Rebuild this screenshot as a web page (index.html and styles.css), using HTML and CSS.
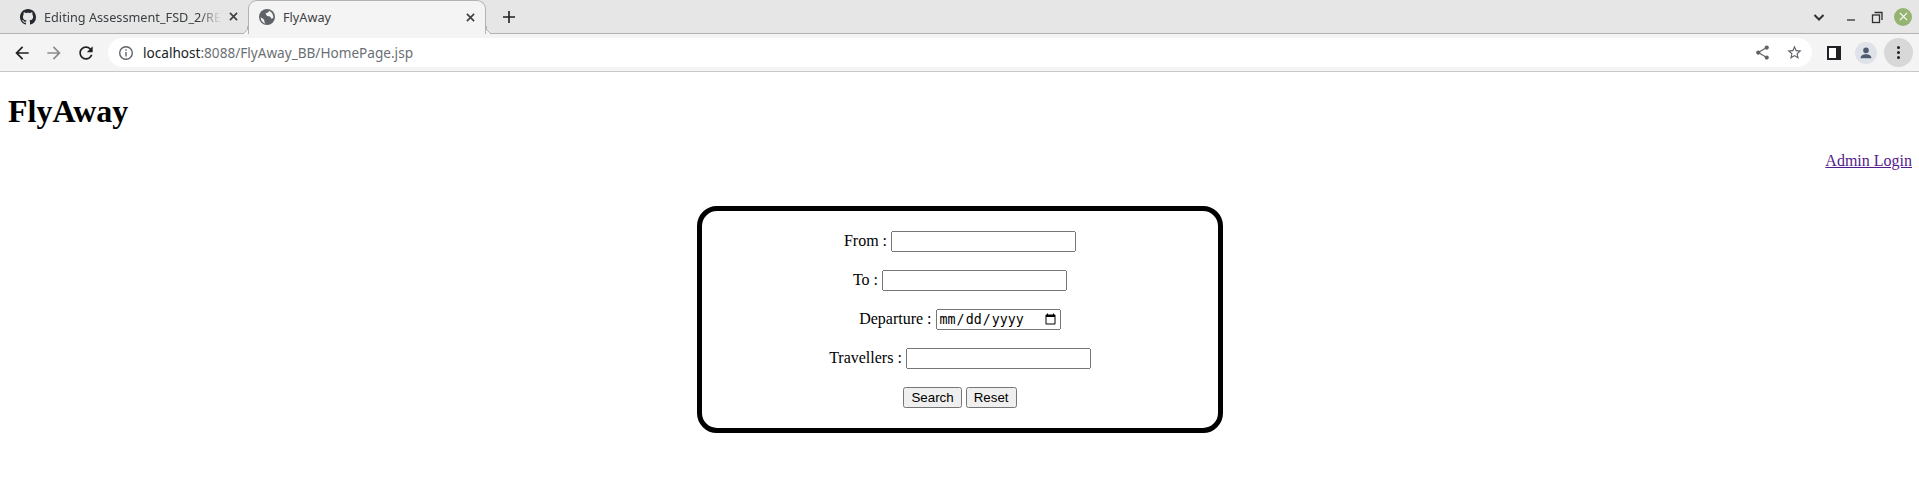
FILE: index.html
```html
<!DOCTYPE html>
<html lang="en">
<head>
    <meta charset="UTF-8">
    <meta name="viewport" content="width=device-width, initial-scale=1.0">
    <title>FlyAway</title>
    <link rel="stylesheet" href="styles.css">
</head>
<body>

<div class="tabbar">
    <div class="tab">
        <svg class="tab-icon" viewBox="0 0 16 16"><path fill="#24292f" d="M8 0C3.58 0 0 3.58 0 8c0 3.54 2.29 6.53 5.47 7.59.4.07.55-.17.55-.38 0-.19-.01-.82-.01-1.49-2.01.37-2.53-.49-2.69-.94-.09-.23-.48-.94-.82-1.13-.28-.15-.68-.52-.01-.53.63-.01 1.08.58 1.23.82.72 1.21 1.87.87 2.33.66.07-.52.28-.87.51-1.07-1.78-.2-3.64-.89-3.64-3.95 0-.87.31-1.59.82-2.15-.08-.2-.36-1.02.08-2.12 0 0 .67-.21 2.2.82.64-.18 1.32-.27 2-.27.68 0 1.36.09 2 .27 1.53-1.04 2.2-.82 2.2-.82.44 1.1.16 1.92.08 2.12.51.56.82 1.27.82 2.15 0 3.07-1.87 3.75-3.65 3.95.29.25.54.73.54 1.48 0 1.07-.01 1.93-.01 2.2 0 .21.15.46.55.38A8.01 8.01 0 0 0 16 8c0-4.42-3.58-8-8-8z"/></svg>
        <span class="tab-title tab-title-fade">Editing Assessment_FSD_2/RE</span>
        <svg class="tab-close" viewBox="0 0 10 10"><path d="M1 1l8 8M9 1l-8 8"/></svg>
    </div>
    <div class="tab tab-active">
        <svg class="tab-icon" viewBox="0 0 16 16"><circle cx="8" cy="8" r="8" fill="#5f6368"/><path fill="#f4f4f4" d="M10.500 1.800L8.800 3.500 6.500 4.500 8 7l3 .5 1.500 2.200 1.800-.7c.3-2.800-1.100-5.700-3.800-7zM1.700 8.200l3.300 2.300.5 2.600 1 1.300c-2.800-.5-4.800-3.200-4.800-6.200z"/></svg>
        <span class="tab-title">FlyAway</span>
        <svg class="tab-close" viewBox="0 0 10 10"><path d="M1 1l8 8M9 1l-8 8"/></svg>
    </div>
    <svg class="new-tab" viewBox="0 0 14 14"><path d="M7 1v12M1 7h12"/></svg>

    <div class="window-controls">
        <svg class="win-chevron" viewBox="0 0 16 16"><path d="M3.500 6L8 10.500 12.500 6"/></svg>
        <svg class="win-min" viewBox="0 0 16 16"><path d="M4 11h8"/></svg>
        <svg class="win-restore" viewBox="0 0 16 16"><path d="M6.500 3.500h7.500V11"/><rect x="4.500" y="6" width="7" height="7.500"/></svg>
        <div class="win-close">
            <svg viewBox="0 0 10 10"><path d="M1 1l8 8M9 1l-8 8"/></svg>
        </div>
    </div>
</div>

<div class="toolbar">
    <div class="tool-btn"><svg viewBox="0 0 24 24"><path fill="#202124" d="M20 11H7.830l5.590-5.590L12 4l-8 8 8 8 1.410-1.410L7.830 13H20v-2z"/></svg></div>
    <div class="tool-btn"><svg viewBox="0 0 24 24"><path fill="#8a8c8e" d="M4 11h12.170l-5.590-5.590L12 4l8 8-8 8-1.410-1.410L16.170 13H4v-2z"/></svg></div>
    <div class="tool-btn"><svg viewBox="0 0 24 24"><path fill="#202124" d="M17.650 6.350C16.200 4.900 14.210 4 12 4c-4.420 0-7.990 3.580-7.990 8s3.570 8 7.990 8c3.730 0 6.840-2.550 7.730-6h-2.080c-.82 2.330-3.040 4-5.650 4-3.310 0-6-2.690-6-6s2.690-6 6-6c1.660 0 3.140.69 4.220 1.780L13 11h7V4l-2.350 2.350z"/></svg></div>

    <div class="omnibox">
        <svg class="info-icon" viewBox="0 0 16 16"><circle cx="8" cy="8" r="6.300"/><path d="M8 7v4.500M8 4.300v1.500"/></svg>
        <span class="url"><span class="url-host">localhost</span>:8088/FlyAway_BB/HomePage.jsp</span>
        <div class="omni-icons">
            <div class="tool-btn"><svg class="small-icon" viewBox="0 0 24 24"><path fill="#5f6368" d="M18 16.080c-.76 0-1.440.3-1.960.77L8.910 12.700c.05-.23.09-.46.09-.7s-.04-.47-.09-.7l7.050-4.110c.54.5 1.250.81 2.040.81 1.660 0 3-1.340 3-3s-1.340-3-3-3-3 1.340-3 3c0 .24.04.47.09.7L8.040 9.810C7.500 9.310 6.790 9 6 9c-1.660 0-3 1.340-3 3s1.340 3 3 3c.79 0 1.500-.31 2.040-.81l7.120 4.160c-.05.21-.08.43-.08.65 0 1.610 1.310 2.920 2.920 2.920 1.610 0 2.920-1.310 2.920-2.920s-1.310-2.920-2.920-2.920z"/></svg></div>
            <div class="tool-btn"><svg class="small-icon" viewBox="0 0 24 24"><path fill="#5f6368" d="M22 9.240l-7.190-.62L12 2 9.190 8.630 2 9.240l5.460 4.730L5.820 21 12 17.270 18.180 21l-1.630-7.030L22 9.240zM12 15.400l-3.760 2.270 1-4.280-3.320-2.880 4.380-.38L12 6.100l1.710 4.040 4.380.38-3.320 2.880 1 4.280L12 15.400z"/></svg></div>
        </div>
    </div>

    <div class="tool-btn"><div class="side-panel"></div></div>
    <div class="tool-btn">
        <div class="avatar">
            <svg viewBox="0 0 16 16"><circle cx="8" cy="5" r="3.200" fill="#4f5b70"/><path fill="#4f5b70" d="M1.800 14c0-3 2.800-4.600 6.200-4.600s6.200 1.600 6.200 4.600z"/></svg>
        </div>
    </div>
    <div class="tool-btn">
        <div class="menu-btn"><span></span><span></span><span></span></div>
    </div>
</div>

<div class="page">
    <h1>FlyAway</h1>
    <div class="admin-link"><a href="#">Admin Login</a></div>

    <form class="search-box">
        <div class="form-row">
            <label for="from">From :</label>
            <input type="text" id="from" name="from">
        </div>
        <div class="form-row">
            <label for="to">To :</label>
            <input type="text" id="to" name="to">
        </div>
        <div class="form-row">
            <label for="departure">Departure :</label>
            <input type="date" id="departure" name="departure">
        </div>
        <div class="form-row">
            <label for="travellers">Travellers :</label>
            <input type="text" id="travellers" name="travellers">
        </div>
        <div class="form-row">
            <input type="submit" value="Search">
            <input type="reset" value="Reset">
        </div>
    </form>
</div>

</body>
</html>
```

FILE: styles.css
```css
body {
    margin: 0;
    background-color: white;
    font-family: "Liberation Serif", serif;
    font-size: 16px;
}

/* browser window top */
.tabbar {
    display: flex;
    align-items: center;
    box-sizing: border-box;
    height: 34px;
    padding-left: 8px;
    background-color: #e6e6e6;
    border-bottom: 1px solid #b3b3b3;
    font-family: "Noto Sans", sans-serif;
    font-size: 12.700px;
    color: #3c4043;
}
.tab {
    display: flex;
    align-items: center;
    box-sizing: border-box;
    width: 240px;
    height: 33px;
    padding: 0 8px 0 12px;
}
.tab-active {
    position: relative;
    width: 238px;
    height: 34px;
    margin-bottom: -1px;
    padding: 0 7px 1px 10px;
    background-color: #f4f4f4;
    border: 1px solid #b3b3b3;
    border-bottom: none;
    border-radius: 9px 9px 0 0;
}
/* little curves where the active tab meets the strip */
.tab-active::before,
.tab-active::after {
    content: "";
    position: absolute;
    bottom: 0;
    width: 8px;
    height: 8px;
}
.tab-active::before {
    left: -9px;
    background: radial-gradient(circle at 0 0, transparent 7.500px, #b3b3b3 7.500px, #b3b3b3 8.500px, #f4f4f4 8.500px);
}
.tab-active::after {
    right: -9px;
    background: radial-gradient(circle at 100% 0, transparent 7.500px, #b3b3b3 7.500px, #b3b3b3 8.500px, #f4f4f4 8.500px);
}
.tab-icon {
    flex: none;
    width: 16px;
    height: 16px;
}
.tab-title {
    flex: 1;
    margin-left: 8px;
    white-space: nowrap;
}
.tab-title-fade {
    -webkit-mask-image: linear-gradient(to right, black 88%, transparent 100%);
}
.tab-close {
    flex: none;
    width: 9px;
    height: 9px;
    margin: 0 3px 0 8px;
    fill: none;
    stroke: #3c4043;
    stroke-width: 1.800;
}
.new-tab {
    width: 14px;
    height: 14px;
    margin-left: 16px;
    fill: none;
    stroke: #202124;
    stroke-width: 1.600;
}

.window-controls {
    display: flex;
    align-items: center;
    margin-left: auto;
    padding-right: 7px;
}
.window-controls svg {
    width: 16px;
    height: 16px;
    fill: none;
    stroke: #303030;
    stroke-width: 1.300;
}
.window-controls .win-chevron {
    stroke-width: 2;
}
.win-min {
    margin-left: 16px;
}
.win-restore {
    margin-left: 9px;
}
.win-close {
    display: flex;
    align-items: center;
    justify-content: center;
    width: 18px;
    height: 18px;
    margin-left: 10px;
    border-radius: 50%;
    background-color: #95b371;
}
.window-controls .win-close svg {
    width: 9px;
    height: 9px;
    stroke: white;
}

.toolbar {
    display: flex;
    align-items: center;
    box-sizing: border-box;
    height: 38px;
    padding: 0 5px 0 6px;
    background-color: #f4f4f4;
    border-bottom: 1px solid #c8c8c8;
}
.tool-btn {
    display: flex;
    flex: none;
    align-items: center;
    justify-content: center;
    width: 32px;
    height: 32px;
}
.tool-btn svg {
    width: 20px;
    height: 20px;
}
.tool-btn .small-icon {
    width: 17px;
    height: 17px;
}
.omnibox {
    display: flex;
    flex: 1;
    align-items: center;
    box-sizing: border-box;
    height: 29px;
    margin: 0 6px;
    padding-left: 10px;
    background-color: white;
    border-radius: 15px;
    font-family: "Noto Sans", sans-serif;
    font-size: 13.600px;
    color: #6b6f74;
}
.info-icon {
    flex: none;
    width: 16px;
    height: 16px;
    fill: none;
    stroke: #5f6368;
    stroke-width: 1.400;
}
.url {
    margin-left: 9px;
}
.url-host {
    color: #202124;
}
.omni-icons {
    display: flex;
    margin-left: auto;
    padding-right: 2px;
}
.side-panel {
    box-sizing: border-box;
    width: 14px;
    height: 14px;
    background-color: white;
    border: 2px solid #202124;
    border-right-width: 5px;
}
.avatar {
    display: flex;
    align-items: center;
    justify-content: center;
    width: 22px;
    height: 22px;
    background-color: #dfe2e8;
    border-radius: 50%;
}
.avatar svg {
    width: 14px;
    height: 14px;
}
.menu-btn {
    display: flex;
    flex-direction: column;
    align-items: center;
    justify-content: center;
    gap: 2px;
    width: 29px;
    height: 29px;
    background-color: #d8d8d8;
    border-radius: 50%;
}
.menu-btn span {
    width: 3px;
    height: 3px;
    background-color: #202124;
    border-radius: 50%;
}

/* page */
.page {
    padding: 0 7px 0 8px;
}
.page h1 {
    color: black;
}
.admin-link {
    text-align: right;
}
.admin-link a {
    color: #551a8b;
}
.search-box {
    box-sizing: border-box;
    width: 526px;
    margin: 36px auto 0;
    padding: 20px 0 20px;
    border: 5px solid black;
    border-radius: 20px;
    text-align: center;
}
.form-row {
    margin-bottom: 18px;
}
.form-row:last-child {
    margin-bottom: 0;
}
.form-row input[type="text"] {
    width: 185px;
    box-sizing: border-box;
}
```
